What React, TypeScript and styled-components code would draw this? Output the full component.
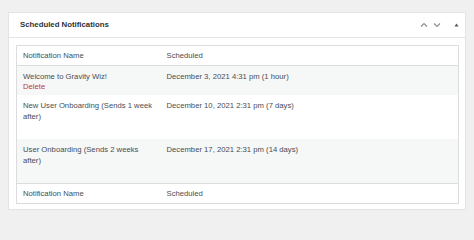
import React from "react"
import styled, { createGlobalStyle } from "styled-components"

const GlobalStyle = createGlobalStyle`
  html, body {
    margin: 0;
    padding: 0;
    background: #f0f0f1;
  }
  body {
    font-family: "Liberation Sans", Arial, sans-serif;
    color: #474d54;
  }
`

const Page = styled.div`
  padding: 12px 8px 10px;
`

const Postbox = styled.section`
  background: #fff;
  border: 1px solid #e2e4e7;
`

const PostboxHeader = styled.div`
  display: flex;
  align-items: center;
  justify-content: space-between;
  height: 24px;
  padding: 0 3px 0 11px;
  border-bottom: 1px solid #e2e4e7;
`

const Title = styled.h2`
  margin: -1px 0 0;
  font-size: 7.8px;
  font-weight: 700;
  color: #2c3338;
`

const HandleActions = styled.div`
  display: flex;
  align-items: center;
`

const HandleButton = styled.span<{ $gap?: number }>`
  display: flex;
  align-items: center;
  justify-content: center;
  width: 12px;
  height: 12px;
  margin-left: ${(p) => p.$gap ?? 0}px;
  color: #8c8f94;
`

const Inside = styled.div`
  padding: 7px 6px 5px 7px;
`

const Table = styled.table`
  width: 100%;
  border-collapse: collapse;
  table-layout: fixed;
  border: 1px solid #dcdcde;
  font-size: 7.7px;
  line-height: 11px;

  th {
    text-align: left;
    font-weight: 400;
    padding: 4px 6px 4px;
  }

  thead th {
    border-bottom: 1px solid #dcdcde;
  }

  tfoot th {
    border-top: 1px solid #dcdcde;
  }

  td {
    vertical-align: top;
    padding: 5px 6px 3px;
  }
`

const Row = styled.tr<{ $alt?: boolean }>`
  background: ${(p) => (p.$alt ? "#f6f7f7" : "#fff")};
`

const RowActions = styled.div<{ $hidden?: boolean }>`
  height: ${(p) => (p.$hidden ? 14 : 10)}px;
  line-height: 10px;
  visibility: ${(p) => (p.$hidden ? "hidden" : "visible")};
`

const DeleteLink = styled.span`
  color: #c0393a;
`

const Chevron = ({ up }: { up?: boolean }) => (
  <svg width="8" height="6" viewBox="0 0 8 6">
    <polyline
      points={up ? "1,4.5 4,1.5 7,4.5" : "1,1.5 4,4.5 7,1.5"}
      fill="none"
      stroke="currentColor"
      strokeWidth="1.2"
    />
  </svg>
)

const Triangle = () => (
  <svg width="5" height="4" viewBox="0 0 5 4">
    <polygon points="0.5,3.5 2.5,0.5 4.5,3.5" fill="#50575e" />
  </svg>
)

const rows = [
  {
    name: "Welcome to Gravity Wiz!",
    scheduled: "December 3, 2021 4:31 pm (1 hour)",
    actions: true,
  },
  {
    name: "New User Onboarding (Sends 1 week after)",
    scheduled: "December 10, 2021 2:31 pm (7 days)",
    actions: false,
  },
  {
    name: "User Onboarding (Sends 2 weeks after)",
    scheduled: "December 17, 2021 2:31 pm (14 days)",
    actions: false,
  },
]

const App = () => {
  return (
    <Page>
      <GlobalStyle />
      <Postbox>
        <PostboxHeader>
          <Title>Scheduled Notifications</Title>
          <HandleActions>
            <HandleButton>
              <Chevron up />
            </HandleButton>
            <HandleButton $gap={1}>
              <Chevron />
            </HandleButton>
            <HandleButton $gap={7}>
              <Triangle />
            </HandleButton>
          </HandleActions>
        </PostboxHeader>
        <Inside>
          <Table>
            <colgroup>
              <col style={{ width: 144 }} />
              <col />
            </colgroup>
            <thead>
              <tr>
                <th>Notification Name</th>
                <th>Scheduled</th>
              </tr>
            </thead>
            <tbody>
              {rows.map((row, i) => (
                <Row key={row.name} $alt={i % 2 === 0}>
                  <td>
                    {row.name}
                    <RowActions $hidden={!row.actions}>
                      <DeleteLink>Delete</DeleteLink>
                    </RowActions>
                  </td>
                  <td>{row.scheduled}</td>
                </Row>
              ))}
            </tbody>
            <tfoot>
              <tr>
                <th>Notification Name</th>
                <th>Scheduled</th>
              </tr>
            </tfoot>
          </Table>
        </Inside>
      </Postbox>
    </Page>
  )
}

export default App
